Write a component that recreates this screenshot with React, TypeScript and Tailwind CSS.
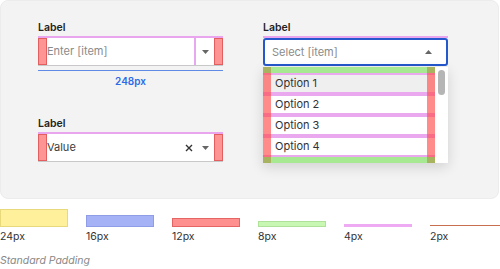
import { ReactNode } from 'react';

function Caret({ up }: { up?: boolean }) {
    return (
        <svg width="7" height="4" viewBox="0 0 7 4" className="text-[#666]">
            <path d={up ? 'M0 4 L3.5 0 L7 4 Z' : 'M0 0 L7 0 L3.5 4 Z'} fill="currentColor" />
        </svg>
    );
}

function RedPad() {
    return <div className="w-[9px] self-stretch border border-[#e35e5e] bg-[#ff9494]" />;
}

function Field({ children, className = '' }: { children: ReactNode; className?: string }) {
    return (
        <div className={className}>
            <div className="mb-[1px] text-[10.5px] leading-[14px] font-semibold text-[#222]">Label</div>
            <div className="h-[2px] bg-[#e9a6ee]" />
            {children}
        </div>
    );
}

const options = ['Option 1', 'Option 2', 'Option 3', 'Option 4'];

export default function App() {
    return (
        <div className="h-[269px] w-[500px] overflow-hidden bg-white [font-family:Inter,sans-serif]">
            {/* Canvas with the specimens */}
            <div className="flex h-[199px] w-[499px] rounded-lg border border-[#ececec] bg-[#f3f3f3] pt-[20px] pl-[37px]">
                {/* Left column */}
                <div className="w-[185px]">
                    <Field>
                        <div className="flex h-[28px] border-b border-[#c8c8c8] bg-white">
                            <RedPad />
                            <div className="flex flex-1 items-center text-[11px] text-[#8a8a8a]">Enter [item]</div>
                            <div className="w-[2px] bg-[#e6a8ee]" />
                            <div className="flex w-[18px] items-center justify-center">
                                <Caret />
                            </div>
                            <RedPad />
                        </div>
                    </Field>
                    <div className="mt-[4px] h-px bg-[#5f8ae6]" />
                    <div className="mt-[4px] text-center text-[10px] leading-[12px] font-semibold text-[#2b6be6]">248px</div>

                    <Field className="mt-[30px]">
                        <div className="flex h-[28px] border-b border-[#c8c8c8] bg-white">
                            <RedPad />
                            <div className="flex flex-1 items-center text-[11px] text-[#3a3a3a]">Value</div>
                            <div className="flex w-[14px] items-center justify-center">
                                <svg width="8" height="8" viewBox="0 0 8 8">
                                    <path d="M1 1 L7 7 M7 1 L1 7" stroke="#333" strokeWidth="1.4" />
                                </svg>
                            </div>
                            <div className="flex w-[18px] items-center justify-center">
                                <Caret />
                            </div>
                            <RedPad />
                        </div>
                    </Field>
                </div>

                {/* Right column: open select */}
                <div className="ml-[40px] w-[185px]">
                    <Field>
                        <div className="flex h-[28px] items-center rounded-[3px] border-2 border-[#2458cc] bg-white pr-[14px] pl-[7px]">
                            <span className="flex-1 text-[11px] text-[#8a8a8a]">Select [item]</span>
                            <Caret up />
                        </div>
                    </Field>
                    <div className="mt-[1px] flex h-[96px] bg-white shadow-[0_4px_12px_rgba(0,0,0,0.14)]">
                        <div className="relative w-[172px] py-[6px]">
                            {options.map((o, i) => (
                                <div
                                    key={o}
                                    className={`flex h-[21px] items-center border-y-2 border-[#eaa8ee] pl-[12px] text-[11px] text-[#333] ${i === 0 ? 'bg-[#efefef]' : 'bg-white'}`}
                                >
                                    {o}
                                </div>
                            ))}
                            <div className="absolute inset-y-0 left-0 w-[8px] bg-[#ff4d4d]/65" />
                            <div className="absolute inset-y-0 right-0 w-[8px] bg-[#ff4d4d]/65" />
                            <div className="absolute inset-x-0 top-0 h-[6px] bg-[#5fd63a]/55" />
                            <div className="absolute inset-x-0 bottom-0 h-[6px] bg-[#5fd63a]/55" />
                        </div>
                        <div className="flex-1 pt-[3px] pl-[3px]">
                            <div className="h-[25px] w-[7px] rounded-full bg-[#b5b5b5]" />
                        </div>
                    </div>
                </div>
            </div>

            {/* Legend */}
            <div className="mt-[10px] flex items-end gap-[18px] text-[10.5px] leading-[14px] text-[#333]">
                <div className="w-[68px] shrink-0">
                    <div className="h-[18px] border border-[#e8da7c] bg-[#fff19c]" />
                    <div className="mt-[3px]">24px</div>
                </div>
                <div className="w-[68px] shrink-0">
                    <div className="h-[12px] border border-[#8f9ce6] bg-[#a6b2f6]" />
                    <div className="mt-[3px]">16px</div>
                </div>
                <div className="w-[68px] shrink-0">
                    <div className="h-[9px] border border-[#e56565] bg-[#ff9090]" />
                    <div className="mt-[3px]">12px</div>
                </div>
                <div className="w-[68px] shrink-0">
                    <div className="h-[6px] border border-[#aee298] bg-[#c8f7b4]" />
                    <div className="mt-[3px]">8px</div>
                </div>
                <div className="w-[68px] shrink-0">
                    <div className="h-[3px] bg-[#eeaaf2]" />
                    <div className="mt-[3px]">4px</div>
                </div>
                <div className="w-[70px] shrink-0">
                    <div className="h-[1.5px] bg-[#c8704e]" />
                    <div className="mt-[4px]">2px</div>
                </div>
            </div>
            <div className="mt-[10px] text-[10.5px] leading-[14px] italic text-[#888]">Standard Padding</div>
        </div>
    );
}
